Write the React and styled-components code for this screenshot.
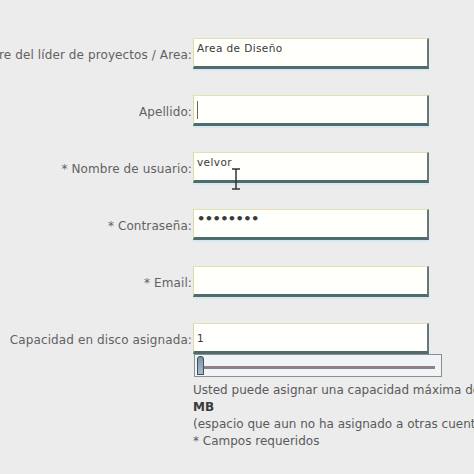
import React from "react";
import styled, { createGlobalStyle } from "styled-components";

const Global = createGlobalStyle`
  html, body { margin: 0; padding: 0; }
  body {
    background: #ececed;
    width: 474px;
    height: 474px;
    overflow: hidden;
    font-family: "DejaVu Sans", Verdana, sans-serif;
  }
`;

const Page = styled.div`
  padding-top: 38px;
  display: flex;
  flex-direction: column;
`;

const Form = styled.div`
  display: flex;
  flex-direction: column;
  gap: 26px;
`;

const Row = styled.div`
  display: flex;
  align-items: center;
  position: relative;
`;

const Label = styled.div`
  width: 192px;
  flex-shrink: 0;
  display: flex;
  justify-content: flex-end;
  white-space: nowrap;
  font-size: 12px;
  color: #626262;
  letter-spacing: 0.1px;
  padding-top: 3px;
`;

const Field = styled.div`
  box-sizing: border-box;
  width: 236px;
  height: 31px;
  margin-left: 1px;
  background: #fffffb;
  border-top: 1px solid #e4e0b0;
  border-left: 1px solid #ddd9a8;
  border-right: 2px solid #66797a;
  border-bottom: 3px solid #4f6b6c;
  box-shadow: 0 2px 0 #d4e9f0;
  display: flex;
  align-items: center;
  padding-left: 3px;
  font-family: "DejaVu Sans", Verdana, sans-serif;
  font-size: ${(p) => (p.$dots ? "13px" : "10.5px")};
  font-weight: ${(p) => (p.$dots ? "bold" : "normal")};
  color: #3a3a3a;
  letter-spacing: ${(p) => (p.$dots ? "-0.6px" : "0.4px")};
  padding-bottom: ${(p) => (p.$top ? "10px" : "0")};
`;

const Caret = styled.span`
  display: inline-block;
  width: 1px;
  height: 18px;
  background: #6a6a40;
`;

const Cursor = styled.svg`
  position: absolute;
  left: 231px;
  top: 16px;
`;

const Slider = styled.div`
  box-sizing: border-box;
  margin-left: 194px;
  width: 248px;
  height: 23px;
  border: 1px solid #8a9090;
  background: #f1f4f6;
  position: relative;
  display: flex;
  align-items: center;
  padding: 0 6px 0 8px;
`;

const Track = styled.div`
  flex: 1;
  height: 3px;
  background: #8d8286;
  margin-top: 4px;
`;

const Handle = styled.div`
  position: absolute;
  left: 2px;
  top: 1px;
  width: 7px;
  height: 19px;
  border-radius: 4px 4px 1px 1px;
  background: linear-gradient(#7d93a8, #a9bccb);
  border: 1px solid #3e4f5e;
  box-sizing: border-box;
`;

const Notes = styled.div`
  margin-left: 193px;
  margin-top: 5px;
  font-size: 12px;
  color: #5a5a5a;
  line-height: 17px;
  white-space: nowrap;
  letter-spacing: 0px;
`;

const Bold = styled.div`
  font-weight: bold;
  color: #3a3a3a;
`;

export default function App() {
  return (
    <>
      <Global />
      <Page>
        <Form>
          <Row>
            <Label>Nombre del líder de proyectos / Area:</Label>
            <Field $top>Area de Diseño</Field>
          </Row>
          <Row>
            <Label>Apellido:</Label>
            <Field>
              <Caret />
            </Field>
          </Row>
          <Row>
            <Label>* Nombre de usuario:</Label>
            <Field $top>velvor</Field>
            <Cursor width="10" height="22" viewBox="0 0 10 22">
              <path d="M1 1h8M5 1v20M1 21h8" stroke="#333" strokeWidth="1.5" fill="none" />
            </Cursor>
          </Row>
          <Row>
            <Label>* Contraseña:</Label>
            <Field $dots $top>••••••••</Field>
          </Row>
          <Row>
            <Label>* Email:</Label>
            <Field />
          </Row>
          <Row>
            <Label>Capacidad en disco asignada:</Label>
            <Field>1</Field>
          </Row>
        </Form>
        <Slider>
          <Handle />
          <Track />
        </Slider>
        <Notes>
          <div>Usted puede asignar una capacidad máxima de</div>
          <Bold>MB</Bold>
          <div>(espacio que aun no ha asignado a otras cuentas)</div>
          <div>* Campos requeridos</div>
        </Notes>
      </Page>
    </>
  );
}
